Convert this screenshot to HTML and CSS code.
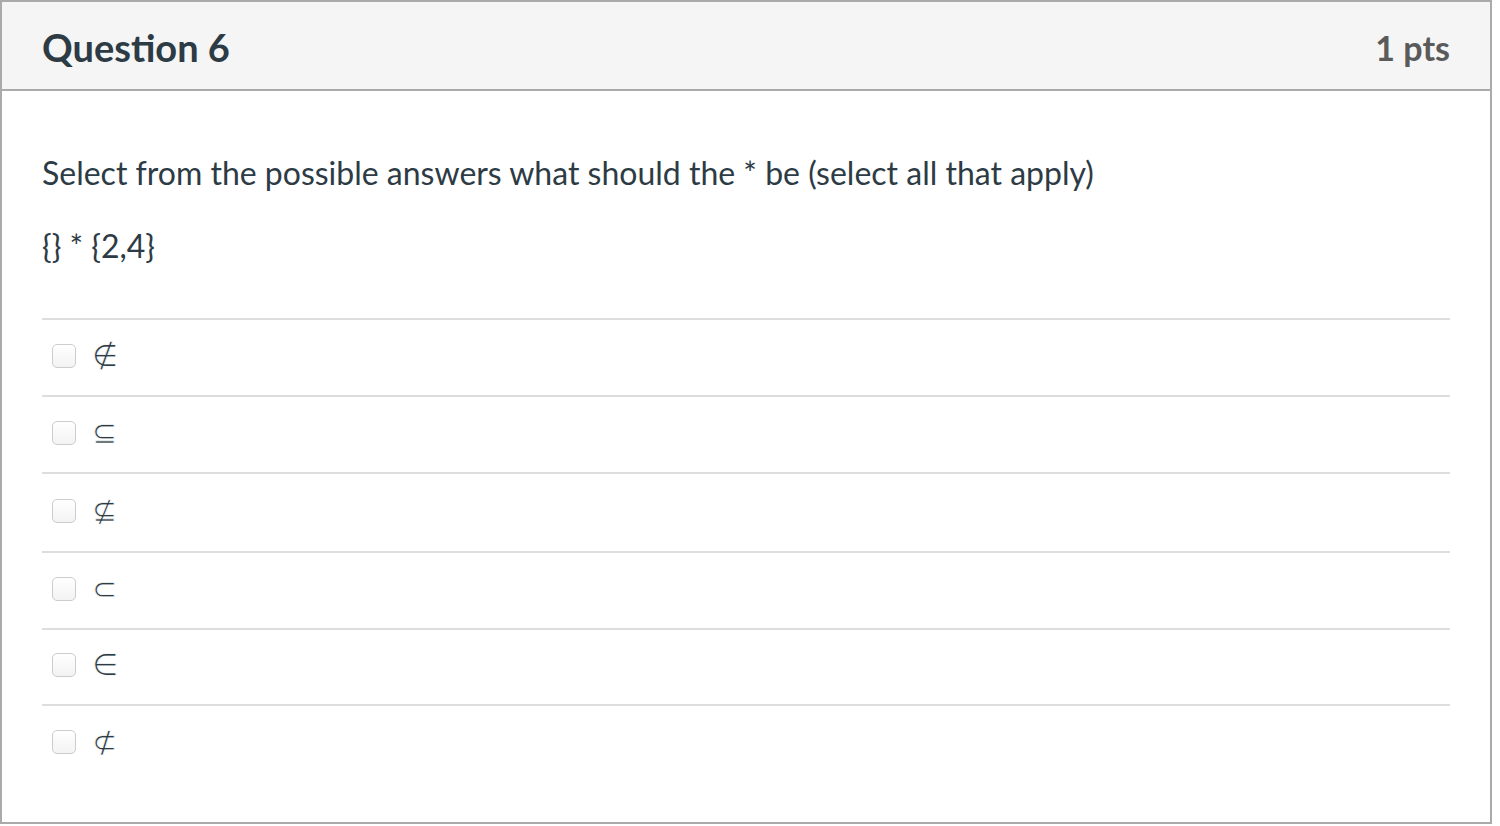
FILE: index.html
```html
<!DOCTYPE html>
<html lang="en">
<head>
<meta charset="utf-8">
<title>Question 6</title>
<link rel="stylesheet" href="styles.css">
</head>
<body>
<div class="question">
  <div class="header">
    <h2 class="title">Question 6</h2>
    <span class="points">1 pts</span>
  </div>
  <div class="content">
    <p class="text">Select from the possible answers what should the * be (select all that apply)</p>
    <p class="text expr">{} * {2,4}</p>
    <div class="answers">
      <label class="answer"><span class="box"></span><span class="sym">∉</span></label>
      <label class="answer"><span class="box"></span><span class="sym">⊆</span></label>
      <label class="answer"><span class="box"></span><span class="sym">⊈</span></label>
      <label class="answer"><span class="box"></span><span class="sym">⊂</span></label>
      <label class="answer"><span class="box"></span><span class="sym">∈</span></label>
      <label class="answer"><span class="box"></span><span class="sym">⊄</span></label>
    </div>
  </div>
</div>
</body>
</html>
```
FILE: styles.css
```css
html, body {
  margin: 0;
  padding: 0;
  background: #ffffff;
}
body {
  font-family: Lato, "Noto Sans", "DejaVu Sans", sans-serif;
  color: #2d3b45;
}
.question {
  box-sizing: border-box;
  width: 1492px;
  height: 824px;
  border: 2px solid #aaaaaa;
  display: flex;
  flex-direction: column;
}
.header {
  box-sizing: border-box;
  height: 89px;
  background: #f5f5f5;
  border-bottom: 2px solid #aaaaaa;
  display: flex;
  align-items: center;
  justify-content: space-between;
  padding: 2px 40px 0 40px;
}
.title {
  margin: 0;
  font-size: 38px;
  font-weight: 700;
  color: #2d3b45;
  line-height: 44px;
}
.points {
  font-size: 34px;
  font-weight: 700;
  color: #5a5a5a;
  line-height: 44px;
  padding-top: 2px;
}
.content {
  padding: 58px 40px 0 40px;
}
.text {
  margin: 0 0 25px 0;
  font-size: 32px;
  line-height: 48px;
}
.expr {
  margin-bottom: 48px;
}
.answers {
  display: flex;
  flex-direction: column;
}
.answer {
  box-sizing: border-box;
  height: 77px;
  border-top: 2px solid #dddddd;
  display: flex;
  align-items: center;
  padding: 0 0 4px 10px;
  gap: 16px;
}
.answer:nth-child(3) {
  height: 79px;
}
.answer:nth-child(5) {
  height: 76px;
}
.box {
  box-sizing: border-box;
  width: 24px;
  height: 24px;
  border: 1px solid #c9cdd0;
  border-radius: 5px;
  background: linear-gradient(#ffffff, #f3f3f3);
  flex: none;
}
.sym {
  font-family: "DejaVu Sans", sans-serif;
  font-size: 30px;
  line-height: 40px;
  color: #2d3b45;
  -webkit-text-stroke: 0.7px #ffffff;
}
```
